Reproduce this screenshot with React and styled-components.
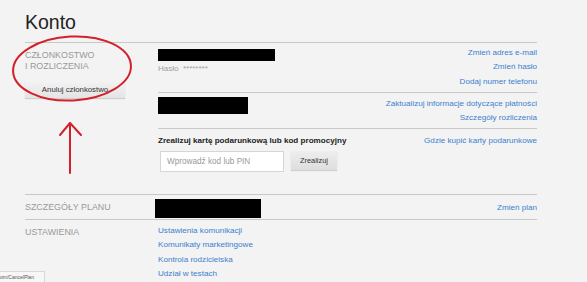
import React from "react";
import styled, { createGlobalStyle } from "styled-components";

const Global = createGlobalStyle`
  html, body { margin: 0; padding: 0; background: #f3f3f3; }
  body { font-family: "Liberation Sans", Arial, sans-serif; width: 587px; height: 282px; overflow: hidden; }
`;

const Page = styled.div`
  position: relative;
  width: 587px;
  height: 282px;
  padding: 0 50px 0 25px;
  box-sizing: border-box;
`;

const Title = styled.h1`
  margin: 0;
  padding-top: 10px;
  height: 42px;
  box-sizing: border-box;
  font-size: 19.5px;
  font-weight: normal;
  color: #222;
  line-height: 24px;
`;

const Section = styled.div`
  display: grid;
  grid-template-columns: 133px 1fr;
  border-top: 1px solid #c8c8c8;
  height: ${(p) => p.$h}px;
  box-sizing: border-box;
`;

const LeftCol = styled.div`
  display: flex;
  flex-direction: column;
  padding-top: ${(p) => p.$pt || 6}px;
`;

const SectionLabel = styled.div`
  font-size: 8.9px;
  line-height: 11px;
  color: #999;
  text-transform: uppercase;
`;

const CancelButton = styled.div`
  margin-top: 9px;
  width: 100px;
  height: 17px;
  background: linear-gradient(#f3f3f3, #e4e4e4);
  box-shadow: 0 1px 1px #cfcfcf;
  font-size: 7.8px;
  line-height: 17px;
  text-align: center;
  color: #333;
`;

const Body = styled.div`
  display: flex;
  flex-direction: column;
`;

const Row = styled.div`
  display: flex;
  justify-content: space-between;
  align-items: flex-start;
  border-top: ${(p) => (p.$first ? "none" : "1px solid #c8c8c8")};
  height: ${(p) => p.$h}px;
  padding-top: ${(p) => p.$pt}px;
  box-sizing: border-box;
`;

const Block = styled.div`
  display: flex;
  flex-direction: column;
`;

const Redact = styled.div`
  width: ${(p) => p.$w}px;
  height: ${(p) => p.$hh}px;
  background: #000;
  margin-left: ${(p) => p.$ml || 0}px;
`;

const Muted = styled.div`
  font-size: 8px;
  color: #a0a0a0;
  margin-top: 2px;
  line-height: 12px;
`;

const Links = styled.div`
  display: flex;
  flex-direction: column;
  align-items: ${(p) => (p.$left ? "flex-start" : "flex-end")};
  margin-top: ${(p) => p.$mt || 0}px;
`;

const Link = styled.a`
  font-size: 8.1px;
  line-height: 14.3px;
  color: #3b80d0;
  text-decoration: none;
  white-space: nowrap;
`;

const Heading = styled.div`
  font-size: 8.1px;
  font-weight: bold;
  color: #222;
  line-height: 14px;
`;

const Form = styled.div`
  display: flex;
  gap: 7px;
  margin-top: 3px;
  margin-left: 2px;
`;

const Input = styled.div`
  width: 124px;
  height: 21px;
  box-sizing: border-box;
  background: #fff;
  border: 1px solid #d6d6d6;
  font-size: 8.2px;
  line-height: 19px;
  padding-left: 6px;
  color: #999;
`;

const RedeemButton = styled.div`
  width: 46px;
  height: 19px;
  background: linear-gradient(#eeeeee, #dedede);
  box-shadow: 0 1px 1px #cfcfcf;
  font-size: 7.4px;
  line-height: 19px;
  text-align: center;
  color: #333;
`;

const Overlay = styled.svg`
  position: absolute;
  left: 0;
  top: 0;
  pointer-events: none;
`;

const Status = styled.div`
  position: absolute;
  left: 0;
  bottom: 0;
  width: 44px;
  height: 10px;
  background: #f7f7f7;
  border-top: 1px solid #d8d8d8;
  border-right: 1px solid #d8d8d8;
  font-size: 5px;
  line-height: 10px;
  color: #555;
  overflow: hidden;
  white-space: nowrap;
`;

export default function App() {
  return (
    <>
      <Global />
      <Page>
        <Title>Konto</Title>
        <Section $h={152}>
          <LeftCol $pt={7}>
            <SectionLabel>
              Członkostwo
              <br />I rozliczenia
            </SectionLabel>
            <CancelButton>Anuluj członkostwo</CancelButton>
          </LeftCol>
          <Body>
            <Row $first $h={49} $pt={6}>
              <Block>
                <Redact $w={117} $hh={12} />
                <Muted>Hasło &nbsp;********</Muted>
              </Block>
              <Links $mt={-3}>
                <Link>Zmień adres e-mail</Link>
                <Link>Zmień hasło</Link>
                <Link>Dodaj numer telefonu</Link>
              </Links>
            </Row>
            <Row $h={36} $pt={4}>
              <Redact $w={90} $hh={17} />
              <Links>
                <Link>Zaktualizuj informacje dotyczące płatności</Link>
                <Link>Szczegóły rozliczenia</Link>
              </Links>
            </Row>
            <Row $h={66} $pt={5}>
              <Block>
                <Heading>Zrealizuj kartę podarunkową lub kod promocyjny</Heading>
                <Form>
                  <Input>Wprowadź kod lub PIN</Input>
                  <RedeemButton>Zrealizuj</RedeemButton>
                </Form>
              </Block>
              <Link>Gdzie kupić karty podarunkowe</Link>
            </Row>
          </Body>
        </Section>
        <Section $h={25}>
          <LeftCol $pt={7}>
            <SectionLabel>Szczegóły planu</SectionLabel>
          </LeftCol>
          <Row $first $h={24} $pt={4}>
            <Redact $w={106} $hh={19} $ml={-3} />
            <Links $mt={2}>
              <Link>Zmień plan</Link>
            </Links>
          </Row>
        </Section>
        <Section $h={70}>
          <LeftCol $pt={7}>
            <SectionLabel>Ustawienia</SectionLabel>
          </LeftCol>
          <Links $left $mt={4}>
            <Link>Ustawienia komunikacji</Link>
            <Link>Komunikaty marketingowe</Link>
            <Link>Kontrola rodzicielska</Link>
            <Link>Udział w testach</Link>
          </Links>
        </Section>
        <Overlay width="587" height="282" viewBox="0 0 587 282">
          <ellipse
            cx="72"
            cy="68.5"
            rx="59"
            ry="32"
            transform="rotate(-3 72 68.5)"
            fill="none"
            stroke="#d3202a"
            strokeWidth="2"
          />
          <path
            d="M70 173 L70 123 M60 135 L70 123 L81 135"
            fill="none"
            stroke="#d3202a"
            strokeWidth="2"
            strokeLinecap="round"
            strokeLinejoin="round"
          />
        </Overlay>
        <Status>om/CancelPlan</Status>
      </Page>
    </>
  );
}
